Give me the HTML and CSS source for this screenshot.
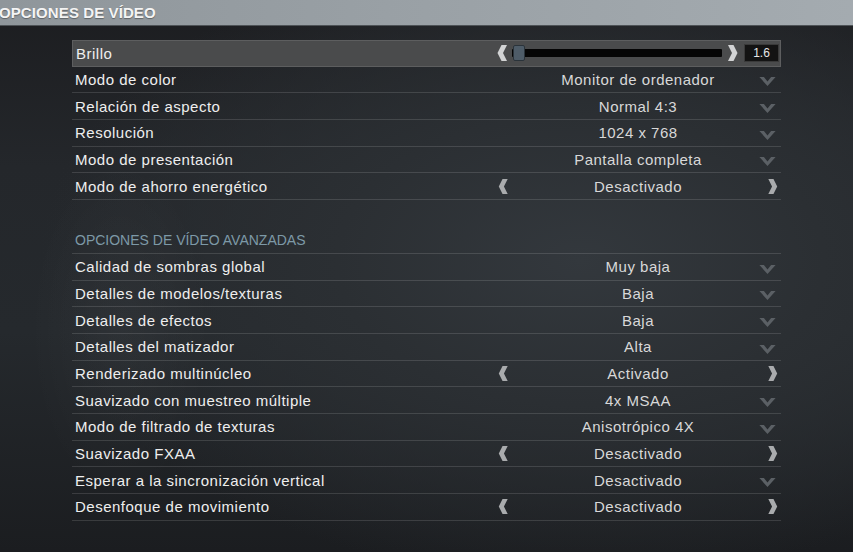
FILE: index.html
```html
<!DOCTYPE html>
<html lang="es">
<head>
<meta charset="utf-8">
<title>Opciones de vídeo</title>
<link rel="stylesheet" href="styles.css">
</head>
<body>
<header class="topbar"><h1 class="title">OPCIONES DE VÍDEO</h1></header>
<main class="panel">
  <div class="row row-active">
    <span class="label">Brillo</span>
    <div class="slider">
      <svg class="chev bright" viewBox="0 0 10 16"><polygon points="4.5,0 10,0 6,8 10,16 4.5,16 0.5,8"/></svg>
      <div class="track"><span class="thumb"></span></div>
      <svg class="chev bright sl-r" viewBox="0 0 10 16"><polygon points="0,0 5.5,0 9.5,8 5.5,16 0,16 4,8"/></svg>
      <span class="numbox">1.6</span>
    </div>
  </div>
  <div class="row"><span class="label">Modo de color</span><div class="ctrl"><span></span><span class="value">Monitor de ordenador</span><svg class="drop" viewBox="0 0 18 10"><polygon points="0,0 5,0 9,5 13,0 18,0 9,10"/></svg></div></div>
  <div class="row"><span class="label">Relación de aspecto</span><div class="ctrl"><span></span><span class="value">Normal 4:3</span><svg class="drop" viewBox="0 0 18 10"><polygon points="0,0 5,0 9,5 13,0 18,0 9,10"/></svg></div></div>
  <div class="row"><span class="label">Resolución</span><div class="ctrl"><span></span><span class="value">1024 x 768</span><svg class="drop" viewBox="0 0 18 10"><polygon points="0,0 5,0 9,5 13,0 18,0 9,10"/></svg></div></div>
  <div class="row"><span class="label">Modo de presentación</span><div class="ctrl"><span></span><span class="value">Pantalla completa</span><svg class="drop" viewBox="0 0 18 10"><polygon points="0,0 5,0 9,5 13,0 18,0 9,10"/></svg></div></div>
  <div class="row"><span class="label">Modo de ahorro energético</span><div class="ctrl"><svg class="chev chev-l" viewBox="0 0 10 16"><polygon points="4.5,0 10,0 6,8 10,16 4.5,16 0.5,8"/></svg><span class="value">Desactivado</span><svg class="chev chev-r" viewBox="0 0 10 16"><polygon points="0,0 5.5,0 9.5,8 5.5,16 0,16 4,8"/></svg></div></div>

  <div class="section">OPCIONES DE VÍDEO AVANZADAS</div>

  <div class="row"><span class="label">Calidad de sombras global</span><div class="ctrl"><span></span><span class="value">Muy baja</span><svg class="drop" viewBox="0 0 18 10"><polygon points="0,0 5,0 9,5 13,0 18,0 9,10"/></svg></div></div>
  <div class="row"><span class="label">Detalles de modelos/texturas</span><div class="ctrl"><span></span><span class="value">Baja</span><svg class="drop" viewBox="0 0 18 10"><polygon points="0,0 5,0 9,5 13,0 18,0 9,10"/></svg></div></div>
  <div class="row"><span class="label">Detalles de efectos</span><div class="ctrl"><span></span><span class="value">Baja</span><svg class="drop" viewBox="0 0 18 10"><polygon points="0,0 5,0 9,5 13,0 18,0 9,10"/></svg></div></div>
  <div class="row"><span class="label">Detalles del matizador</span><div class="ctrl"><span></span><span class="value">Alta</span><svg class="drop" viewBox="0 0 18 10"><polygon points="0,0 5,0 9,5 13,0 18,0 9,10"/></svg></div></div>
  <div class="row"><span class="label">Renderizado multinúcleo</span><div class="ctrl"><svg class="chev chev-l" viewBox="0 0 10 16"><polygon points="4.5,0 10,0 6,8 10,16 4.5,16 0.5,8"/></svg><span class="value">Activado</span><svg class="chev chev-r" viewBox="0 0 10 16"><polygon points="0,0 5.5,0 9.5,8 5.5,16 0,16 4,8"/></svg></div></div>
  <div class="row"><span class="label">Suavizado con muestreo múltiple</span><div class="ctrl"><span></span><span class="value">4x MSAA</span><svg class="drop" viewBox="0 0 18 10"><polygon points="0,0 5,0 9,5 13,0 18,0 9,10"/></svg></div></div>
  <div class="row"><span class="label">Modo de filtrado de texturas</span><div class="ctrl"><span></span><span class="value">Anisotrópico 4X</span><svg class="drop" viewBox="0 0 18 10"><polygon points="0,0 5,0 9,5 13,0 18,0 9,10"/></svg></div></div>
  <div class="row"><span class="label">Suavizado FXAA</span><div class="ctrl"><svg class="chev chev-l" viewBox="0 0 10 16"><polygon points="4.5,0 10,0 6,8 10,16 4.5,16 0.5,8"/></svg><span class="value">Desactivado</span><svg class="chev chev-r" viewBox="0 0 10 16"><polygon points="0,0 5.5,0 9.5,8 5.5,16 0,16 4,8"/></svg></div></div>
  <div class="row"><span class="label">Esperar a la sincronización vertical</span><div class="ctrl"><span></span><span class="value">Desactivado</span><svg class="drop" viewBox="0 0 18 10"><polygon points="0,0 5,0 9,5 13,0 18,0 9,10"/></svg></div></div>
  <div class="row"><span class="label">Desenfoque de movimiento</span><div class="ctrl"><svg class="chev chev-l" viewBox="0 0 10 16"><polygon points="4.5,0 10,0 6,8 10,16 4.5,16 0.5,8"/></svg><span class="value">Desactivado</span><svg class="chev chev-r" viewBox="0 0 10 16"><polygon points="0,0 5.5,0 9.5,8 5.5,16 0,16 4,8"/></svg></div></div>
</main>
</body>
</html>
```

FILE: styles.css
```css
html, body {
  margin: 0;
  padding: 0;
  height: 100%;
}

body {
  width: 853px;
  height: 552px;
  overflow: hidden;
  font-family: "Liberation Sans", Arial, sans-serif;
  color: #e4e4e4;
  background:
    radial-gradient(ellipse 90px 170px at 120px 330px, rgba(255,255,255,0.035), rgba(255,255,255,0) 100%),
    radial-gradient(ellipse 540px 320px at 580px 260px, #33383d 0%, #2b2f33 45%, rgba(30,32,35,0) 100%),
    linear-gradient(180deg, #1c1d20 0%, #24272b 30%, #25292d 60%, #1b1d20 100%);
}

.topbar {
  height: 26px;
  box-sizing: border-box;
  background: linear-gradient(90deg, #8f969b 0%, #9aa1a6 50%, #a4abb0 100%);
  border-bottom: 1px solid #4e5357;
  display: flex;
  align-items: center;
}

.title {
  margin: 0 0 0 -1px;
  font-size: 15px;
  font-weight: bold;
  color: #f4f4f4;
  letter-spacing: 0.1px;
  text-shadow: 0 1px 1px rgba(0,0,0,0.35);
}

.panel {
  margin: 14px 72px 0 72px;
  width: 709px;
}

.row {
  height: 26.67px;
  box-sizing: border-box;
  border-bottom: 1px solid rgba(255,255,255,0.13);
  display: flex;
  align-items: center;
  justify-content: space-between;
  font-size: 15px;
  letter-spacing: 0.5px;
}

.row-active {
  background: #4a4b4c;
  border: 1px solid #5d5e5f;
}

.label {
  padding-left: 3px;
  color: #eeeeee;
}

.ctrl {
  width: 286px;
  height: 100%;
  display: grid;
  grid-template-columns: 28px 1fr 28px;
  align-items: center;
}

.value {
  text-align: center;
  color: #d8d8d8;
}

.chev {
  width: 10px;
  height: 15px;
  fill: #a9abad;
}

.chev-l {
  justify-self: start;
  margin-left: 3px;
}

.chev-r {
  justify-self: end;
  margin-right: 3px;
}

.chev.bright {
  fill: #d2d3d4;
  width: 10px;
  height: 16px;
}

.drop {
  width: 17px;
  height: 9px;
  fill: #5b6065;
  justify-self: end;
  margin-right: 5px;
  margin-top: 5px;
}

.slider {
  width: 286px;
  display: flex;
  align-items: center;
  padding-left: 3px;
  box-sizing: border-box;
}

.track {
  position: relative;
  width: 210px;
  height: 8px;
  margin-left: 5px;
  background: #050505;
  border-radius: 1px;
}

.thumb {
  position: absolute;
  left: 1px;
  top: -4px;
  width: 12px;
  height: 16px;
  box-sizing: border-box;
  background: #4e5c68;
  border: 1px solid #2a333a;
  border-radius: 2px;
}

.sl-r {
  margin-left: 6px;
}

.numbox {
  margin-left: 6px;
  width: 35px;
  height: 18px;
  box-sizing: border-box;
  background: #131313;
  border: 1px solid #3a3a3a;
  color: #e6e6e6;
  font-size: 12px;
  letter-spacing: 0;
  display: flex;
  align-items: center;
  justify-content: center;
}

.section {
  height: 54px;
  box-sizing: border-box;
  border-bottom: 1px solid rgba(255,255,255,0.13);
  display: flex;
  align-items: flex-end;
  padding: 0 0 5px 3px;
  font-size: 14px;
  color: #7d99a7;
}
```
